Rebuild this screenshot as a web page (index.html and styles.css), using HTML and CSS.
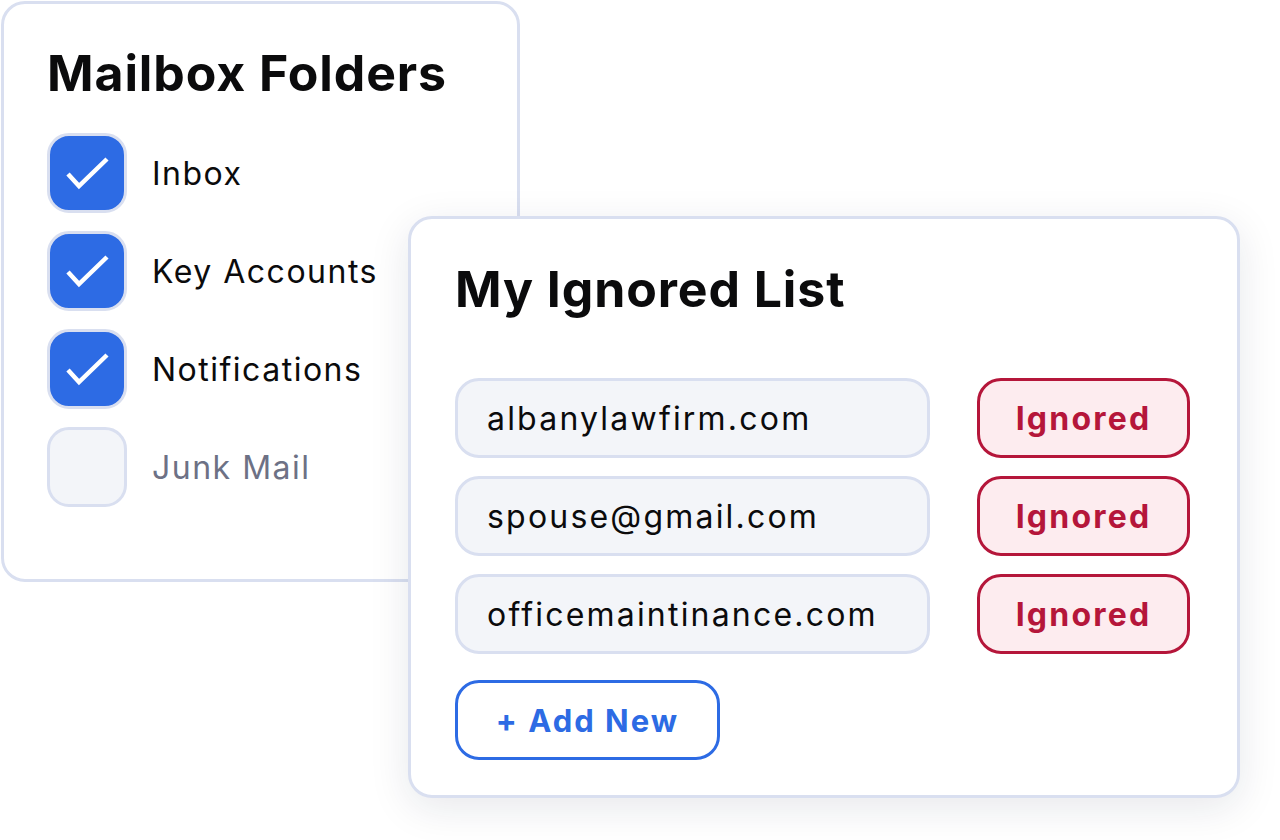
FILE: index.html
```html
<!DOCTYPE html>
<html lang="en">
<head>
    <meta charset="UTF-8">
    <meta name="viewport" content="width=device-width, initial-scale=1.0">
    <title>Mailbox Filters</title>
    <link rel="stylesheet" href="styles.css">
</head>
<body>

    <div class="stage">

        <!-- Mailbox folders card -->
        <section class="card folders-card">
            <h2>Mailbox Folders</h2>
            <ul class="folder-list">
                <li class="folder">
                    <span class="checkbox checked">
                        <svg viewBox="0 0 74 74"><polyline points="18,38 29,50 57,23"/></svg>
                    </span>
                    Inbox
                </li>
                <li class="folder">
                    <span class="checkbox checked">
                        <svg viewBox="0 0 74 74"><polyline points="18,38 29,50 57,23"/></svg>
                    </span>
                    Key Accounts
                </li>
                <li class="folder">
                    <span class="checkbox checked">
                        <svg viewBox="0 0 74 74"><polyline points="18,38 29,50 57,23"/></svg>
                    </span>
                    Notifications
                </li>
                <li class="folder muted">
                    <span class="checkbox"></span>
                    Junk Mail
                </li>
            </ul>
        </section>

        <!-- Ignored list card -->
        <section class="card ignored-card">
            <h2>My Ignored List</h2>
            <ul class="ignored-list">
                <li class="ignored-row">
                    <span class="address">albanylawfirm.com</span>
                    <span class="tag">Ignored</span>
                </li>
                <li class="ignored-row">
                    <span class="address">spouse@gmail.com</span>
                    <span class="tag">Ignored</span>
                </li>
                <li class="ignored-row">
                    <span class="address">officemaintinance.com</span>
                    <span class="tag">Ignored</span>
                </li>
            </ul>
            <button class="add-btn">+ Add New</button>
        </section>

    </div>

</body>
</html>
```

FILE: styles.css
```css
* {
    margin: 0;
    padding: 0;
    box-sizing: border-box;
}

body {
    font-family: 'Inter', 'Open Sans', sans-serif;
    background-color: #fff;
    color: #0b0b0c;
}

.stage {
    position: relative;
    width: 1280px;
    height: 840px;
    padding: 1px 0 0 1px;
}

.card {
    background-color: #fff;
    border: 3px solid #d9dff0;
    border-radius: 24px;
}

.card h2 {
    font-size: 50px;
    line-height: 60px;
    font-weight: 700;
    letter-spacing: 0.9px;
}

ul {
    list-style: none;
}

/* Left card */
.folders-card {
    width: 519px;
    height: 581px;
    padding: 39px 40px 0 43px;
}

.folder-list {
    margin-top: 30px;
    display: flex;
    flex-direction: column;
    gap: 18px;
}

.folder {
    display: flex;
    align-items: center;
    gap: 25px;
    font-size: 32px;
    letter-spacing: 1.5px;
    height: 80px;
}

.folder.muted {
    color: #6d7185;
}

.checkbox {
    width: 80px;
    height: 80px;
    flex-shrink: 0;
    border: 3px solid #d9dff0;
    border-radius: 22px;
    background-color: #f3f5f9;
}

.checkbox.checked {
    background-color: #2d6be4;
}

.checkbox svg {
    display: block;
    width: 74px;
    height: 74px;
    fill: none;
    stroke: #fff;
    stroke-width: 4.5;
}

/* Right card */
.ignored-card {
    position: absolute;
    left: 408px;
    top: 216px;
    width: 832px;
    height: 582px;
    padding: 40px 44px 0 44px;
    box-shadow: 0 10px 40px rgba(20, 30, 60, 0.10);
}

.ignored-list {
    margin-top: 59px;
    display: flex;
    flex-direction: column;
    gap: 18px;
}

.ignored-row {
    display: flex;
    gap: 47px;
}

.address {
    width: 475px;
    height: 80px;
    display: flex;
    align-items: center;
    padding-left: 29px;
    font-size: 32px;
    letter-spacing: 2.2px;
    background-color: #f3f5f9;
    border: 3px solid #d9dff0;
    border-radius: 24px;
}

.tag {
    width: 213px;
    height: 80px;
    display: flex;
    align-items: center;
    justify-content: center;
    font-size: 32px;
    font-weight: 700;
    letter-spacing: 2.2px;
    color: #b5163a;
    background-color: #fdecef;
    border: 3px solid #b5163a;
    border-radius: 24px;
}

.add-btn {
    margin-top: 26px;
    width: 265px;
    height: 80px;
    font-family: inherit;
    font-size: 31px;
    font-weight: 700;
    letter-spacing: 2px;
    color: #2d6be4;
    background-color: #fff;
    border: 3px solid #2d6be4;
    border-radius: 24px;
    cursor: pointer;
}
```
